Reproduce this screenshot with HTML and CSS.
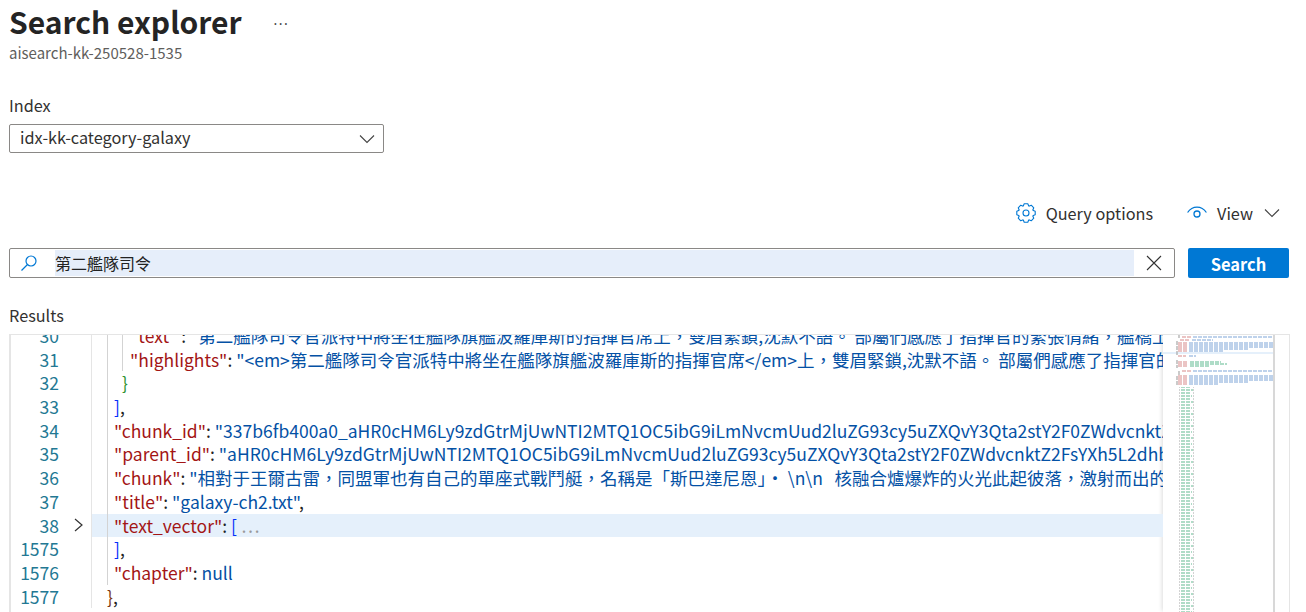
FILE: index.html
```html
<!DOCTYPE html>
<html lang="en">
<head>
  <meta charset="UTF-8" />
  <meta name="viewport" content="width=device-width, initial-scale=1.0"/>
  <title>Search explorer</title>
  <link rel="stylesheet" href="styles.css">
</head>
<body>
  <div class="wrapper">
    <div class="title-row">
      <h1>Search explorer</h1>
      <span class="more">···</span>
    </div>
    <div class="subtitle">aisearch-kk-250528-1535</div>

    <label class="field-label">Index</label>
    <div class="select">
      <span>idx-kk-category-galaxy</span>
      <svg width="16" height="16" viewBox="0 0 16 16" fill="none" stroke="#444" stroke-width="1.1"><path d="M1 4.500l7 7 7-7"/></svg>
    </div>

    <div class="toolbar">
      <div class="tool">
        <svg width="20" height="20" viewBox="0 0 20 20" fill="none" stroke="#0078d4" stroke-width="1.1" stroke-linejoin="round">
          <path id="gear-tooth" d="M16.7 7.200L19.200 8.200V11.800L16.700 12.800"/>
          <use href="#gear-tooth" transform="rotate(45 10 10)"/>
          <use href="#gear-tooth" transform="rotate(90 10 10)"/>
          <use href="#gear-tooth" transform="rotate(135 10 10)"/>
          <use href="#gear-tooth" transform="rotate(180 10 10)"/>
          <use href="#gear-tooth" transform="rotate(225 10 10)"/>
          <use href="#gear-tooth" transform="rotate(270 10 10)"/>
          <use href="#gear-tooth" transform="rotate(315 10 10)"/>
          <circle cx="10" cy="10" r="3"/>
        </svg>
        <span>Query options</span>
      </div>
      <div class="tool">
        <svg width="20" height="16" viewBox="0 0 20 16" fill="none" stroke="#0078d4" stroke-width="1.300"><path d="M.6 7.500C3 4 6.200 2.200 10 2.200s7 1.800 9.400 5.300"/><circle cx="10" cy="9" r="3"/></svg>
        <span>View</span>
        <svg class="view-chevron" width="16" height="16" viewBox="0 0 16 16" fill="none" stroke="#444" stroke-width="1.1"><path d="M1 4.500l7 7 7-7"/></svg>
      </div>
    </div>

    <div class="search-row">
      <div class="search-box">
        <svg class="search-icon" width="18" height="18" viewBox="0 0 18 18" fill="none" stroke="#0078d4" stroke-width="1.2"><circle cx="11" cy="7" r="5"/><path d="M7.500 10.500L1.500 16.500"/></svg>
        <div class="search-text"><span>第二艦隊司令</span></div>
        <svg class="clear-icon" width="16" height="16" viewBox="0 0 16 16" fill="none" stroke="#333" stroke-width="1.1"><path d="M1 1l14 14M15 1L1 15"/></svg>
      </div>
      <button class="search-btn">Search</button>
    </div>

    <div class="results-label">Results</div>

    <div class="editor">
      <div class="lines">
        <div class="scroller">
          <div class="line"><span class="num">30</span><span class="fold"></span><div class="code"><i class="guide"></i><i class="guide g2"></i><span class="k">"text"&nbsp;</span><span class="p">: </span><span class="s">"第二艦隊司令官派特中將坐在艦隊旗艦波羅庫斯的指揮官席上，雙眉緊鎖,沈默不語。 部屬們感應了指揮官的緊張情緒，艦橋上瀰漫著沉重的氣氛"</span></div></div>
          <div class="line"><span class="num">31</span><span class="fold"></span><div class="code"><i class="guide"></i><i class="guide g2"></i><span class="k">"highlights"</span><span class="p">: </span><span class="s">"&lt;em&gt;第二艦隊司令官派特中將坐在艦隊旗艦波羅庫斯的指揮官席&lt;/em&gt;上，雙眉緊鎖,沈默不語。 部屬們感應了指揮官的緊張情緒"</span></div></div>
          <div class="line"><span class="num">32</span><span class="fold"></span><div class="code"><i class="guide"></i><span class="b-green">}</span></div></div>
          <div class="line"><span class="num">33</span><span class="fold"></span><div class="code"><i class="guide"></i><span class="b-blue in1">]</span><span class="p">,</span></div></div>
          <div class="line"><span class="num">34</span><span class="fold"></span><div class="code"><i class="guide"></i><span class="k in1">"chunk_id"</span><span class="p">: </span><span class="s">"337b6fb400a0_aHR0cHM6Ly9zdGtrMjUwNTI2MTQ1OC5ibG9iLmNvcmUud2luZG93cy5uZXQvY3Qta2stY2F0ZWdvcnktZ2FsYXh5L2dhbGF4eS1jaDIudHh0"</span></div></div>
          <div class="line"><span class="num">35</span><span class="fold"></span><div class="code"><i class="guide"></i><span class="k in1">"parent_id"</span><span class="p">: </span><span class="s">"aHR0cHM6Ly9zdGtrMjUwNTI2MTQ1OC5ibG9iLmNvcmUud2luZG93cy5uZXQvY3Qta2stY2F0ZWdvcnktZ2FsYXh5L2dhbGF4eS1jaDIudHh0"</span></div></div>
          <div class="line"><span class="num">36</span><span class="fold"></span><div class="code"><i class="guide"></i><span class="k in1">"chunk"</span><span class="p">: </span><span class="s">"相對于王爾古雷，同盟軍也有自己的單座式戰鬥艇，名稱是「斯巴達尼恩」· \n\n&nbsp;&nbsp;&nbsp;核融合爐爆炸的火光此起彼落，激射而出的光束交錯縱橫"</span></div></div>
          <div class="line"><span class="num">37</span><span class="fold"></span><div class="code"><i class="guide"></i><span class="k in1">"title"</span><span class="p">: </span><span class="s">"galaxy-ch2.txt"</span><span class="p">,</span></div></div>
          <div class="line active"><span class="num">38</span><span class="fold"><svg width="12" height="16" viewBox="0 0 12 16" fill="none" stroke="#333" stroke-width="1.2"><path d="M2 2l7 6-7 6"/></svg></span><div class="code"><i class="guide"></i><span class="k in1">"text_vector"</span><span class="p">: </span><span class="b-blue">[</span><span class="dots"> …</span></div></div>
          <div class="line"><span class="num">1575</span><span class="fold"></span><div class="code"><i class="guide"></i><span class="b-blue in1">]</span><span class="p">,</span></div></div>
          <div class="line"><span class="num">1576</span><span class="fold"></span><div class="code"><i class="guide"></i><span class="k in1">"chapter"</span><span class="p">: </span><span class="s">null</span></div></div>
          <div class="line"><span class="num">1577</span><span class="fold"></span><div class="code"><span class="b-brown">}</span><span class="p">,</span></div></div>
        </div>
      </div>
      <svg class="minimap" width="110" height="278" viewBox="0 0 110 278">
        <defs>
          <pattern id="green-rows" width="15" height="12" patternUnits="userSpaceOnUse">
            <path class="mm-n" d="M3 1H14M3 4H12M3 7H15M3 10H13"/>
            <path class="mm-dot" d="M0 1H2M0 4H2M0 7H2M0 10H2"/>
          </pattern>
        </defs>
        <rect class="mm-active" x="0" y="17" width="110" height="2"/>
        <path class="mm-k" d="M19 2H29M17 5H27M15 8H25M15 10H25M15 12H25M15 14H25M15 16H25M15 21H23M15 27H25M15 29H25M15 31H25M19 36H29M15 41H25M15 43H25M15 45H25M15 47H25M15 49H25"/>
        <path class="mm-s" d="M30 2H110M29 5H50M26 8H110M26 10H110M26 12H110M26 14H85M26 16H60M26 21H33M30 36H110M26 41H110M26 43H110M26 45H110M26 47H85M26 49H55"/>
        <path class="mm-n" d="M27 27H58M27 29H64M27 31H46"/>
        <path class="mm-dot" d="M16 0V3M14 6V20M14 25V33M16 36V40M14 41V50"/>
        <rect x="16" y="52" width="15" height="226" fill="url(#green-rows)"/>
      </svg>
      <div class="scrollbar"></div>
    </div>
  </div>
</body>
</html>
```

FILE: styles.css
```css
* { margin: 0; padding: 0; box-sizing: border-box; }
body {
  font-family: "Noto Sans CJK TC", "Noto Sans", sans-serif;
  background: #fff;
  color: #323130;
  overflow: hidden;
}
.wrapper {
  width: 1306px;
  height: 612px;
  padding: 0 17px 0 9px;
  display: flex;
  flex-direction: column;
  overflow: hidden;
}
.title-row { display: flex; align-items: center; height: 42px; margin-bottom: 2px; }
h1 { font-size: 30px; font-weight: 700; line-height: 42px; color: #242424; }
.more { margin-left: 32px; padding-top: 5px; font-family: "Noto Sans", sans-serif; font-size: 14px; letter-spacing: 1.5px; color: #444; }
.subtitle { font-size: 15px; line-height: 18px; color: #605e5c; }

.field-label { margin-top: 31px; font-size: 16.25px; line-height: 24px; }
.select {
  margin-top: 7px;
  width: 375px;
  height: 29px;
  padding: 0 8px 3px 10px;
  display: flex;
  align-items: center;
  justify-content: space-between;
  border: 1px solid #8a8886;
  border-radius: 2px;
  font-size: 16.25px;
}
.select svg { margin-top: 3px; }

.toolbar {
  margin-top: 45px;
  height: 30px;
  padding-right: 9px;
  display: flex;
  justify-content: flex-end;
  align-items: center;
  gap: 34px;
  font-size: 16.25px;
}
.tool { display: flex; align-items: center; gap: 10px; }
.view-chevron { margin-left: 1px; }

.search-row { margin-top: 20px; display: flex; gap: 13px; }
.search-box {
  flex: 1;
  height: 30px;
  padding: 1px 12px 1px 10px;
  display: flex;
  align-items: center;
  border: 1px solid #8a8886;
  border-radius: 2px;
}
.search-icon { flex: none; width: 18px; margin-right: 17px; }
.search-text {
  flex: 1;
  height: 26px;
  line-height: 26px;
  font-size: 16px;
  background: #e6eefa;
  color: #222;
}
.clear-icon { flex: none; margin-left: 12px; }
.search-btn {
  width: 101px;
  height: 30px;
  padding-top: 1px;
  border: none;
  border-radius: 2px;
  background: #0078d4;
  color: #fff;
  font-family: inherit;
  font-size: 16.5px;
  font-weight: 700;
}

.results-label { margin-top: 25px; font-size: 16.25px; line-height: 24px; }

.editor {
  margin-top: 7px;
  margin-right: -1px;
  flex: 1;
  min-height: 0;
  display: flex;
  border-top: 1px solid #e5e5e5;
  border-left: 2px solid #e5e5e5;
  overflow: hidden;
}
.lines { flex: 1; min-width: 0; overflow: hidden; }
.scroller { margin-top: -11px; }
.line { display: flex; height: 23.7px; line-height: 23.7px; font-size: 17.5px; white-space: nowrap; }
.num { flex: none; width: 48px; text-align: right; color: #237893; }
.fold { flex: none; width: 33px; display: flex; align-items: center; padding-left: 14px; border-right: 1px solid #e5e5e5; }
.code { flex: 1; min-width: 0; padding-left: 15px; overflow: hidden; position: relative; }
.active .code { background: #e5f0fb; }
.guide { position: absolute; top: 0; bottom: 0; left: 15px; border-left: 1px solid #d3d3d3; }
.g2 { left: 30px; }
.line:nth-child(-n+2) .code { padding-left: 38px; }
.in1 { margin-left: 7px; }
.b-green { margin-left: 15px; color: #319331; }
.b-blue { color: #0431fa; }
.b-brown { color: #7b3814; }
.k { color: #a31515; }
.s { color: #0451a5; }
.p { color: #222; }
.dots { color: #999; }

.minimap { flex: none; box-shadow: -3px 0 4px -2px #ddd; }
.minimap path { fill: none; stroke-width: 1.2; stroke-dasharray: 4 1; }
.mm-k { stroke: #d88a8a; }
.mm-s { stroke: #7ea6d8; }
.mm-n { stroke: #5fb98f; }
.mm-dot { stroke: #a8a8a8; }
.mm-active { fill: #e5f0fb; }
.scrollbar { flex: none; width: 17px; border-left: 2px solid #d8d8d8; border-right: 1px solid #e5e5e5; }
```
